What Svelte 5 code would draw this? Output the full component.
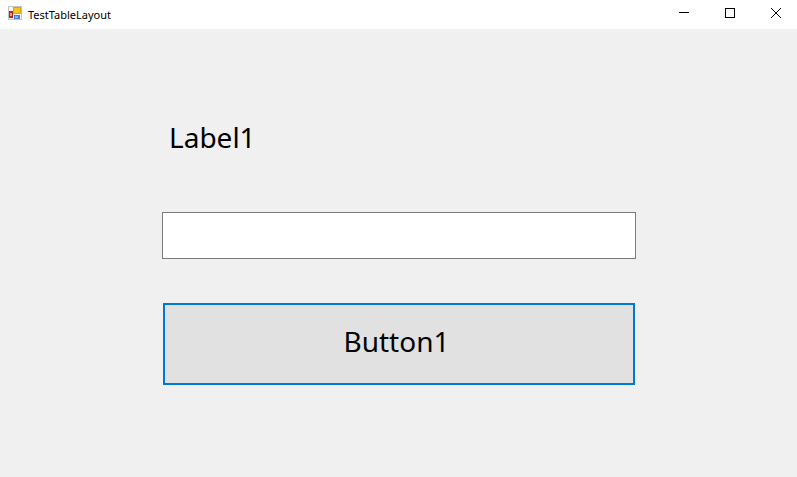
<script>
  let text = '';
</script>

<div class="window">
  <header class="titlebar">
    <svg class="app-icon" width="14" height="14" viewBox="0 0 14 14" shape-rendering="crispEdges">
      <rect x="0" y="0" width="14" height="14" fill="#c4c4c4" />
      <rect x="1" y="1" width="12" height="12" fill="#f6f6f6" />
      <rect x="1" y="5" width="4" height="7" fill="#b5261e" />
      <rect x="2" y="7" width="2" height="3" fill="#e89a8c" />
      <rect x="5" y="1" width="8" height="7" fill="#d9a400" />
      <rect x="6" y="2" width="6" height="5" fill="#f7c520" />
      <rect x="6" y="9" width="6" height="4" fill="#3f7fd6" />
      <rect x="7" y="10" width="3" height="2" fill="#8db8ee" />
    </svg>
    <span class="title">TestTableLayout</span>
    <div class="controls">
      <button class="ctl" aria-label="Minimize">
        <svg width="10" height="10" viewBox="0 0 10 10" shape-rendering="crispEdges"><rect x="0" y="4" width="10" height="1" fill="#000" /></svg>
      </button>
      <button class="ctl" aria-label="Maximize">
        <svg width="10" height="10" viewBox="0 0 10 10" shape-rendering="crispEdges"><rect x="0.5" y="0.5" width="9" height="9" fill="none" stroke="#000" /></svg>
      </button>
      <button class="ctl" aria-label="Close">
        <svg width="10" height="10" viewBox="0 0 10 10"><path d="M0 0L10 10M10 0L0 10" fill="none" stroke="#000" stroke-width="1" /></svg>
      </button>
    </div>
  </header>

  <main class="client">
    <div class="layout">
      <div class="label">Label1</div>
      <input class="textbox" type="text" bind:value={text} />
      <button class="action">Button1</button>
    </div>
  </main>
</div>

<style>
  :global(body) {
    margin: 0;
    background: #f0f0f0;
  }

  .window {
    width: 797px;
    height: 477px;
    display: flex;
    flex-direction: column;
    overflow: hidden;
    font-family: "Noto Sans", "Open Sans", sans-serif;
    color: #000;
  }

  .titlebar {
    height: 29px;
    flex: none;
    display: flex;
    align-items: center;
    background: #fff;
    padding-left: 8px;
    box-sizing: border-box;
  }

  .app-icon {
    flex: none;
    margin-top: -3px;
  }

  .title {
    margin-left: 6px;
    font-size: 11px;
    margin-top: -1px;
  }

  .controls {
    margin-left: auto;
    display: flex;
    height: 100%;
  }

  .ctl {
    width: 46px;
    height: 29px;
    padding: 0 0 3px 4px;
    border: none;
    background: none;
    display: flex;
    align-items: center;
    justify-content: center;
  }

  .client {
    flex: 1;
    background: #f0f0f0;
    padding: 87px 0 0 162px;
  }

  .layout {
    width: 474px;
    display: flex;
    flex-direction: column;
  }

  .label {
    height: 44px;
    margin-left: 7px;
    font-size: 28px;
    line-height: 42px;
  }

  .textbox {
    height: 47px;
    margin-top: 52px;
    box-sizing: border-box;
    border: 1px solid #7a7a7a;
    background: #fff;
    outline: none;
    padding: 0 6px;
    font: inherit;
    font-size: 28px;
  }

  .action {
    height: 82px;
    margin: 44px 1px 0;
    box-sizing: border-box;
    border: 2px solid #0078d7;
    background: #e1e1e1;
    color: #000;
    font: inherit;
    font-size: 28px;
    padding: 0 5px 7px 0;
  }
</style>
